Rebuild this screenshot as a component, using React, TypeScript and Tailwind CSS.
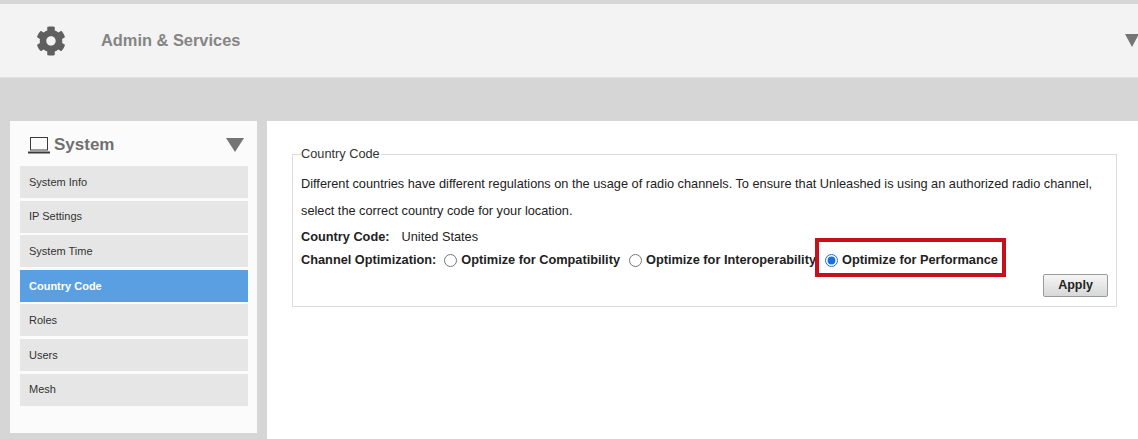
import { FaCog } from "react-icons/fa"

const MENU_ITEMS = ["System Info", "IP Settings", "System Time", "Country Code", "Roles", "Users", "Mesh"]

function Triangle({ className }: { className: string }) {
  return (
    <svg viewBox="0 0 18 14" preserveAspectRatio="none" className={className} fill="#757575">
      <path d="M0 0H18L9 14Z" />
    </svg>
  )
}

function LaptopIcon() {
  return (
    <svg viewBox="0 0 22 17" className="h-[17px] w-[22px]" fill="none" stroke="#3a3a3a">
      <rect x="2.5" y="0.5" width="17" height="12.5" strokeWidth="1" />
      <path d="M0 15.5H22" strokeWidth="2" />
    </svg>
  )
}

function Radio({ label, checked }: { label: string; checked?: boolean }) {
  return (
    <label className="flex items-center font-bold text-[#222]">
      <input type="radio" name="optimization" defaultChecked={checked} className="m-0 mr-[4px] h-[13px] w-[13px] accent-[#1a6fe0]" />
      {label}
    </label>
  )
}

export default function App() {
  return (
    <div className="flex h-[439px] w-[1138px] flex-col overflow-hidden bg-[#d6d6d6] pt-[4px] font-['Liberation_Sans',Arial,sans-serif]">
      {/* Header */}
      <header className="flex h-[74px] shrink-0 items-center justify-between overflow-hidden border-b border-[#e2e2e2] bg-[#f3f3f3] pl-[36px]">
        <div className="flex items-center">
          <FaCog className="h-[30px] w-[30px] text-[#5f5f5f]" />
          <span className="ml-[35px] text-[16.4px] font-bold text-[#858585]">Admin &amp; Services</span>
        </div>
        <Triangle className="-mr-[1px] -mt-[1px] h-[13px] w-[14px]" />
      </header>

      <div className="mt-[43px] flex min-h-0 flex-1 items-start pl-[10px]">
        {/* Sidebar */}
        <aside className="h-[312px] w-[247px] shrink-0 bg-[#fbfbfb] pl-[10px] pr-[9px]">
          <div className="flex h-[45px] items-center justify-between pl-[8px] pr-[4px] pt-[3px]">
            <div className="flex items-center gap-[4px]">
              <LaptopIcon />
              <span className="text-[17px] font-bold text-[#707070]">System</span>
            </div>
            <Triangle className="h-[14px] w-[18px]" />
          </div>
          <nav className="flex flex-col gap-[2.6px]">
            {MENU_ITEMS.map((item) =>
              item === "Country Code" ? (
                <div key={item} className="flex h-[32px] items-center bg-[#5a9fe2] pl-[9px] text-[11px] font-bold text-white">
                  {item}
                </div>
              ) : (
                <div key={item} className="flex h-[32px] items-center bg-[#e6e6e6] pl-[9px] text-[11px] text-[#333]">
                  {item}
                </div>
              ),
            )}
          </nav>
        </aside>

        {/* Content */}
        <main className="ml-[10px] h-[318px] flex-1 bg-white pl-[25px] pr-[21px] pt-[25px] text-[12.75px] text-[#222]">
          <fieldset className="relative h-[161px] border border-[#dcdcdc] px-[8px]">
            <legend className="pb-[2px] pr-[1px] text-[12.75px] leading-[15px] text-[#333]">Country Code</legend>
            <p className="mt-[7px] leading-[27px]">
              Different countries have different regulations on the usage of radio channels. To ensure that Unleashed is using an authorized radio channel,
              <br />
              select the correct country code for your location.
            </p>
            <div className="mt-[4px] flex h-[18px] items-center">
              <span className="font-bold">Country Code:</span>
              <span className="ml-[12px]">United States</span>
            </div>
            <div className="mt-[5px] flex h-[18px] items-center">
              <span className="mr-[8px] font-bold">Channel Optimization:</span>
              <Radio label="Optimize for Compatibility" />
              <span className="w-[9px]" />
              <Radio label="Optimize for Interoperability" />
              <span className="w-[9px]" />
              <Radio label="Optimize for Performance" checked />
            </div>
            {/* Callout around the selected option */}
            <div className="absolute left-[522px] top-[75px] h-[39px] w-[191px] border-[4px] border-[#c8101a]" />
            <div className="absolute bottom-[9px] right-[8px]">
              <button className="h-[23px] w-[65px] rounded-[2px] border border-[#9a9a9a] bg-gradient-to-b from-[#f6f6f6] to-[#d8d8d8] text-[12.5px] font-bold text-[#222]">
                Apply
              </button>
            </div>
          </fieldset>
        </main>
      </div>
    </div>
  )
}
